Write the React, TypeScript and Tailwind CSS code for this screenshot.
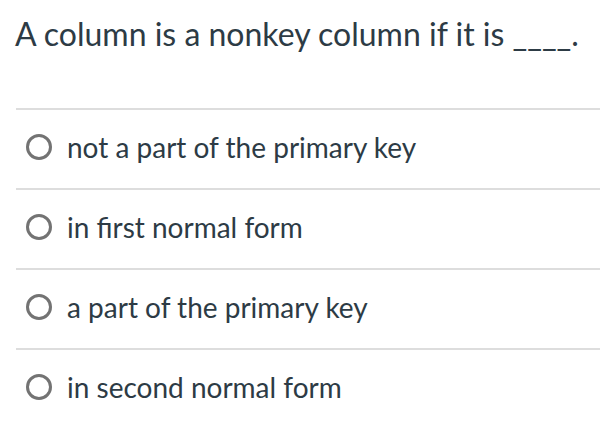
export default function App() {
  const opts = [
    "not a part of the primary key",
    "in first normal form",
    "a part of the primary key",
    "in second normal form",
  ];
  return (
    <div className="w-[600px] h-[442px] bg-white overflow-hidden text-[#2d3b45]" style={{ fontFamily: "Lato, sans-serif" }}>
      <div className="pl-[15px] pt-[12px] h-[108px] text-[32px] leading-[44px]">
        A column is a nonkey column if it is ____.
      </div>
      <div className="ml-[16px]">
        {opts.map((o) => (
          <div key={o} className="border-t-2 border-[#dddddd] h-[80px] flex items-center pb-[5px]">
            <div className="ml-[10px] mt-[1px] w-[26px] h-[26px] rounded-full border-[3px] border-[#737373] shrink-0" />
            <div className="ml-[15px] text-[28px] leading-[34px]">{o}</div>
          </div>
        ))}
      </div>
    </div>
  );
}
